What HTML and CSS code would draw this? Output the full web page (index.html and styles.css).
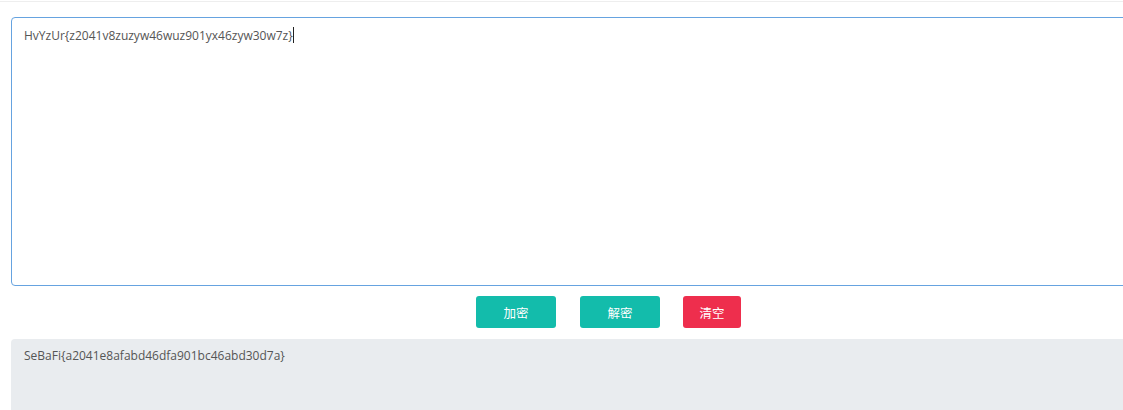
FILE: index.html
```html
<!DOCTYPE html>
<html lang="zh">
<head>
<meta charset="utf-8">
<title>加密解密</title>
<link rel="stylesheet" href="styles.css">
</head>
<body>
<div class="topline"></div>
<div class="wrap">
  <div class="input">HvYzUr{z2041v8zuzyw46wuz901yx46zyw30w7z}<span class="caret"></span></div>
  <div class="actions">
    <button class="btn btn-teal">加密</button>
    <button class="btn btn-teal">解密</button>
    <button class="btn btn-red">清空</button>
  </div>
  <div class="output">SeBaFi{a2041e8afabd46dfa901bc46abd30d7a}</div>
</div>
</body>
</html>
```
FILE: styles.css
```css
html, body {
  margin: 0;
  padding: 0;
  overflow: hidden;
  background: #fff;
}
body {
  font-family: "Open Sans", "Noto Sans CJK SC", sans-serif;
  color: #555;
  width: 1123px;
  height: 410px;
}
.topline {
  height: 1px;
  margin-top: 1px;
  background: #eeeeee;
}
.wrap {
  width: 1195px;
  margin-left: 11px;
  padding-top: 15px;
}
.input {
  box-sizing: border-box;
  height: 269px;
  border: 1px solid #66a3e0;
  border-radius: 4px;
  padding: 9px 12px;
  font-size: 12px;
  line-height: 18px;
  color: #555;
}
.caret {
  display: inline-block;
  width: 1px;
  height: 16px;
  background: #222;
  vertical-align: -3px;
}
.actions {
  display: flex;
  justify-content: center;
  gap: 24px;
  margin-top: 10px;
}
.btn {
  height: 32px;
  border: none;
  border-radius: 3px;
  color: #fff;
  font-family: "Noto Sans CJK SC", sans-serif;
  font-size: 12.5px;
  padding: 0;
  cursor: pointer;
}
.btn-teal {
  width: 80px;
  background: #13bcab;
}
.btn-red {
  width: 58px;
  margin-left: -1px;
  background: #ee2e4d;
}
.output {
  box-sizing: border-box;
  margin-top: 11px;
  height: 80px;
  background: #e9ecef;
  border-radius: 4px 4px 0 0;
  padding: 8px 13px;
  font-size: 12px;
  line-height: 18px;
  color: #555;
}
```
